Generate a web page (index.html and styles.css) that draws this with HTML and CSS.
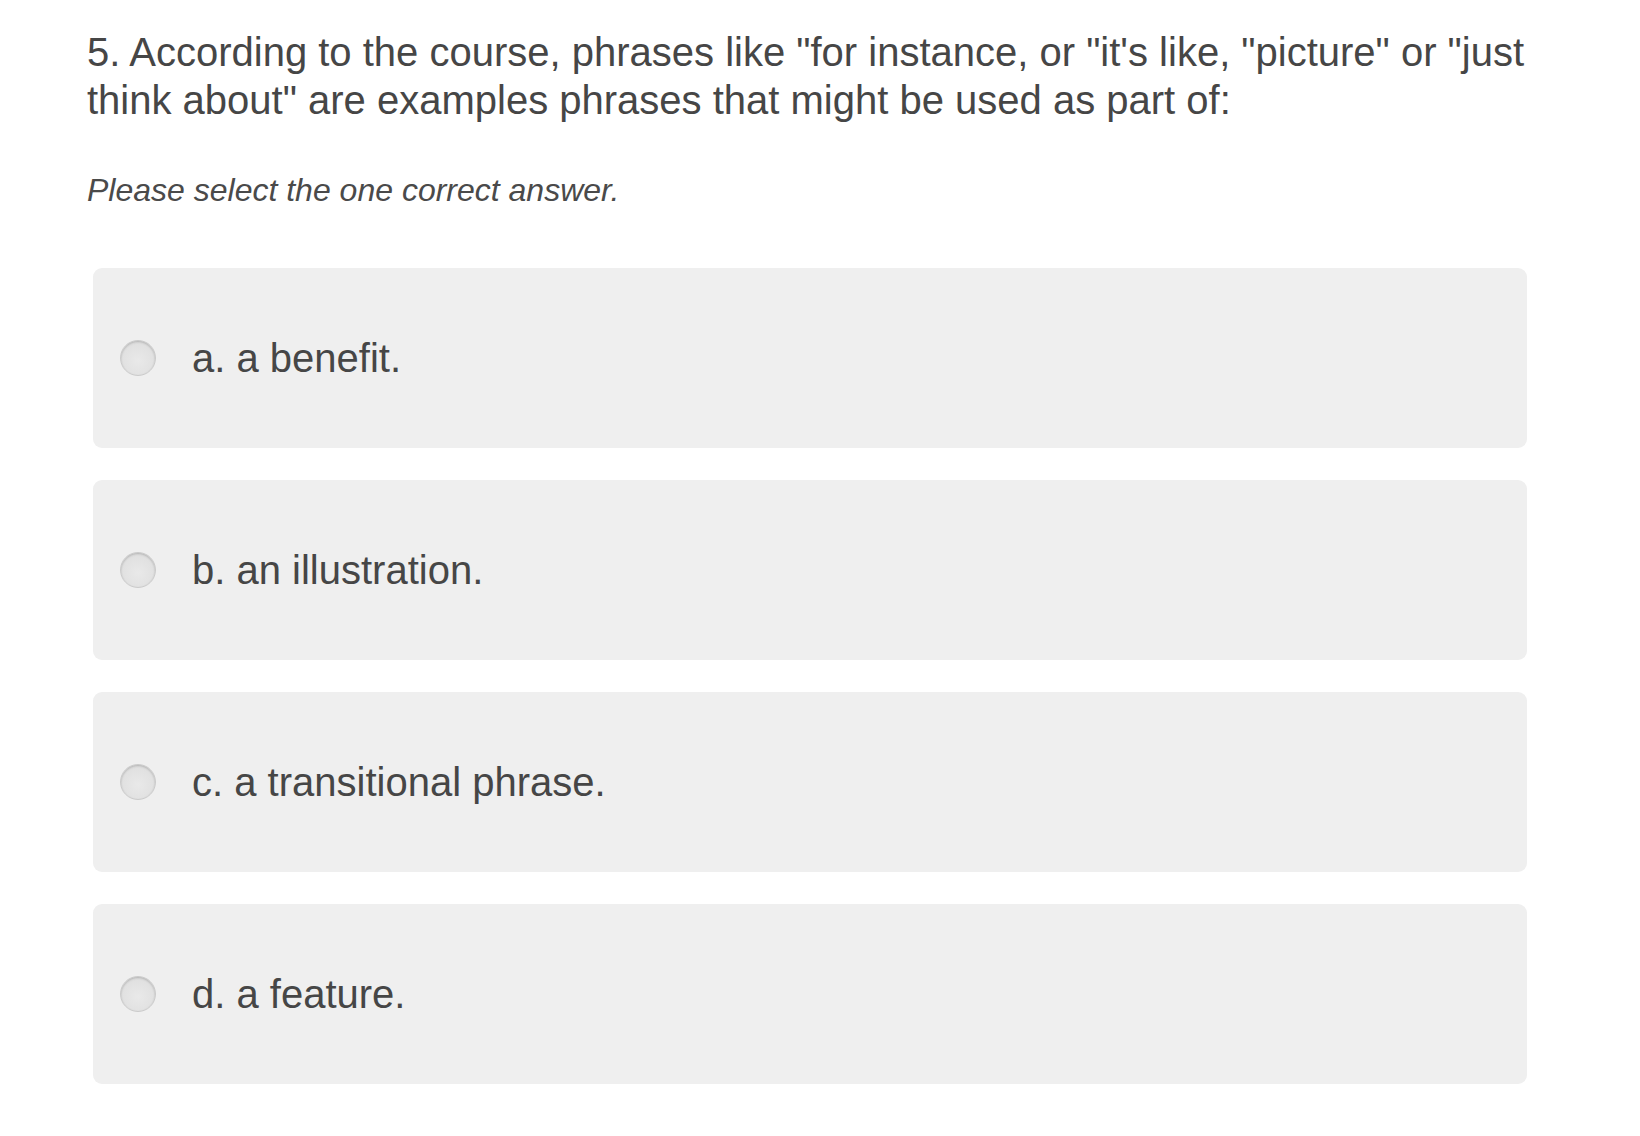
FILE: index.html
```html
<!DOCTYPE html>
<html lang="en">
<head>
<meta charset="utf-8">
<title>Question 5</title>
<link rel="stylesheet" href="styles.css">
</head>
<body>
<main class="question">
  <h1 class="question-title">5. According to the course, phrases like "for instance, or "it's like, "picture" or "just think about" are examples phrases that might be used as part of:</h1>
  <p class="question-hint">Please select the one correct answer.</p>
  <ul class="options">
    <li class="option"><span class="radio"></span><span class="option-label">a. a benefit.</span></li>
    <li class="option"><span class="radio"></span><span class="option-label">b. an illustration.</span></li>
    <li class="option"><span class="radio"></span><span class="option-label">c. a transitional phrase.</span></li>
    <li class="option"><span class="radio"></span><span class="option-label">d. a feature.</span></li>
  </ul>
</main>
</body>
</html>
```
FILE: styles.css
```css
html, body {
  margin: 0;
  padding: 0;
  background: #ffffff;
}

body {
  font-family: "Liberation Sans", Arial, Helvetica, sans-serif;
  color: #464646;
}

.question {
  padding: 28px 113px 0 87px;
}

.question-title {
  margin: 0;
  font-size: 40px;
  line-height: 48px;
  font-weight: normal;
  color: #464646;
}

.question-hint {
  margin: 48px 0 0 0;
  font-size: 32px;
  line-height: 36px;
  font-style: italic;
  color: #4a4a4a;
}

.options {
  list-style: none;
  margin: 60px 0 0 6px;
  padding: 0;
  display: flex;
  flex-direction: column;
  gap: 32px;
}

.option {
  height: 180px;
  background: #efefef;
  border-radius: 9px;
  display: flex;
  align-items: center;
  padding-left: 27px;
}

.radio {
  width: 36px;
  height: 36px;
  border-radius: 50%;
  box-sizing: border-box;
  border: 1px solid #cbcbcb;
  background: radial-gradient(circle at 50% 58%, #e9e9e9 0%, #e1e1e1 60%, #d2d2d2 100%);
  box-shadow: inset 0 1px 2px rgba(0, 0, 0, 0.18);
  flex: none;
}

.option-label {
  margin-left: 36px;
  font-size: 40px;
  line-height: 48px;
  color: #464646;
}
```
